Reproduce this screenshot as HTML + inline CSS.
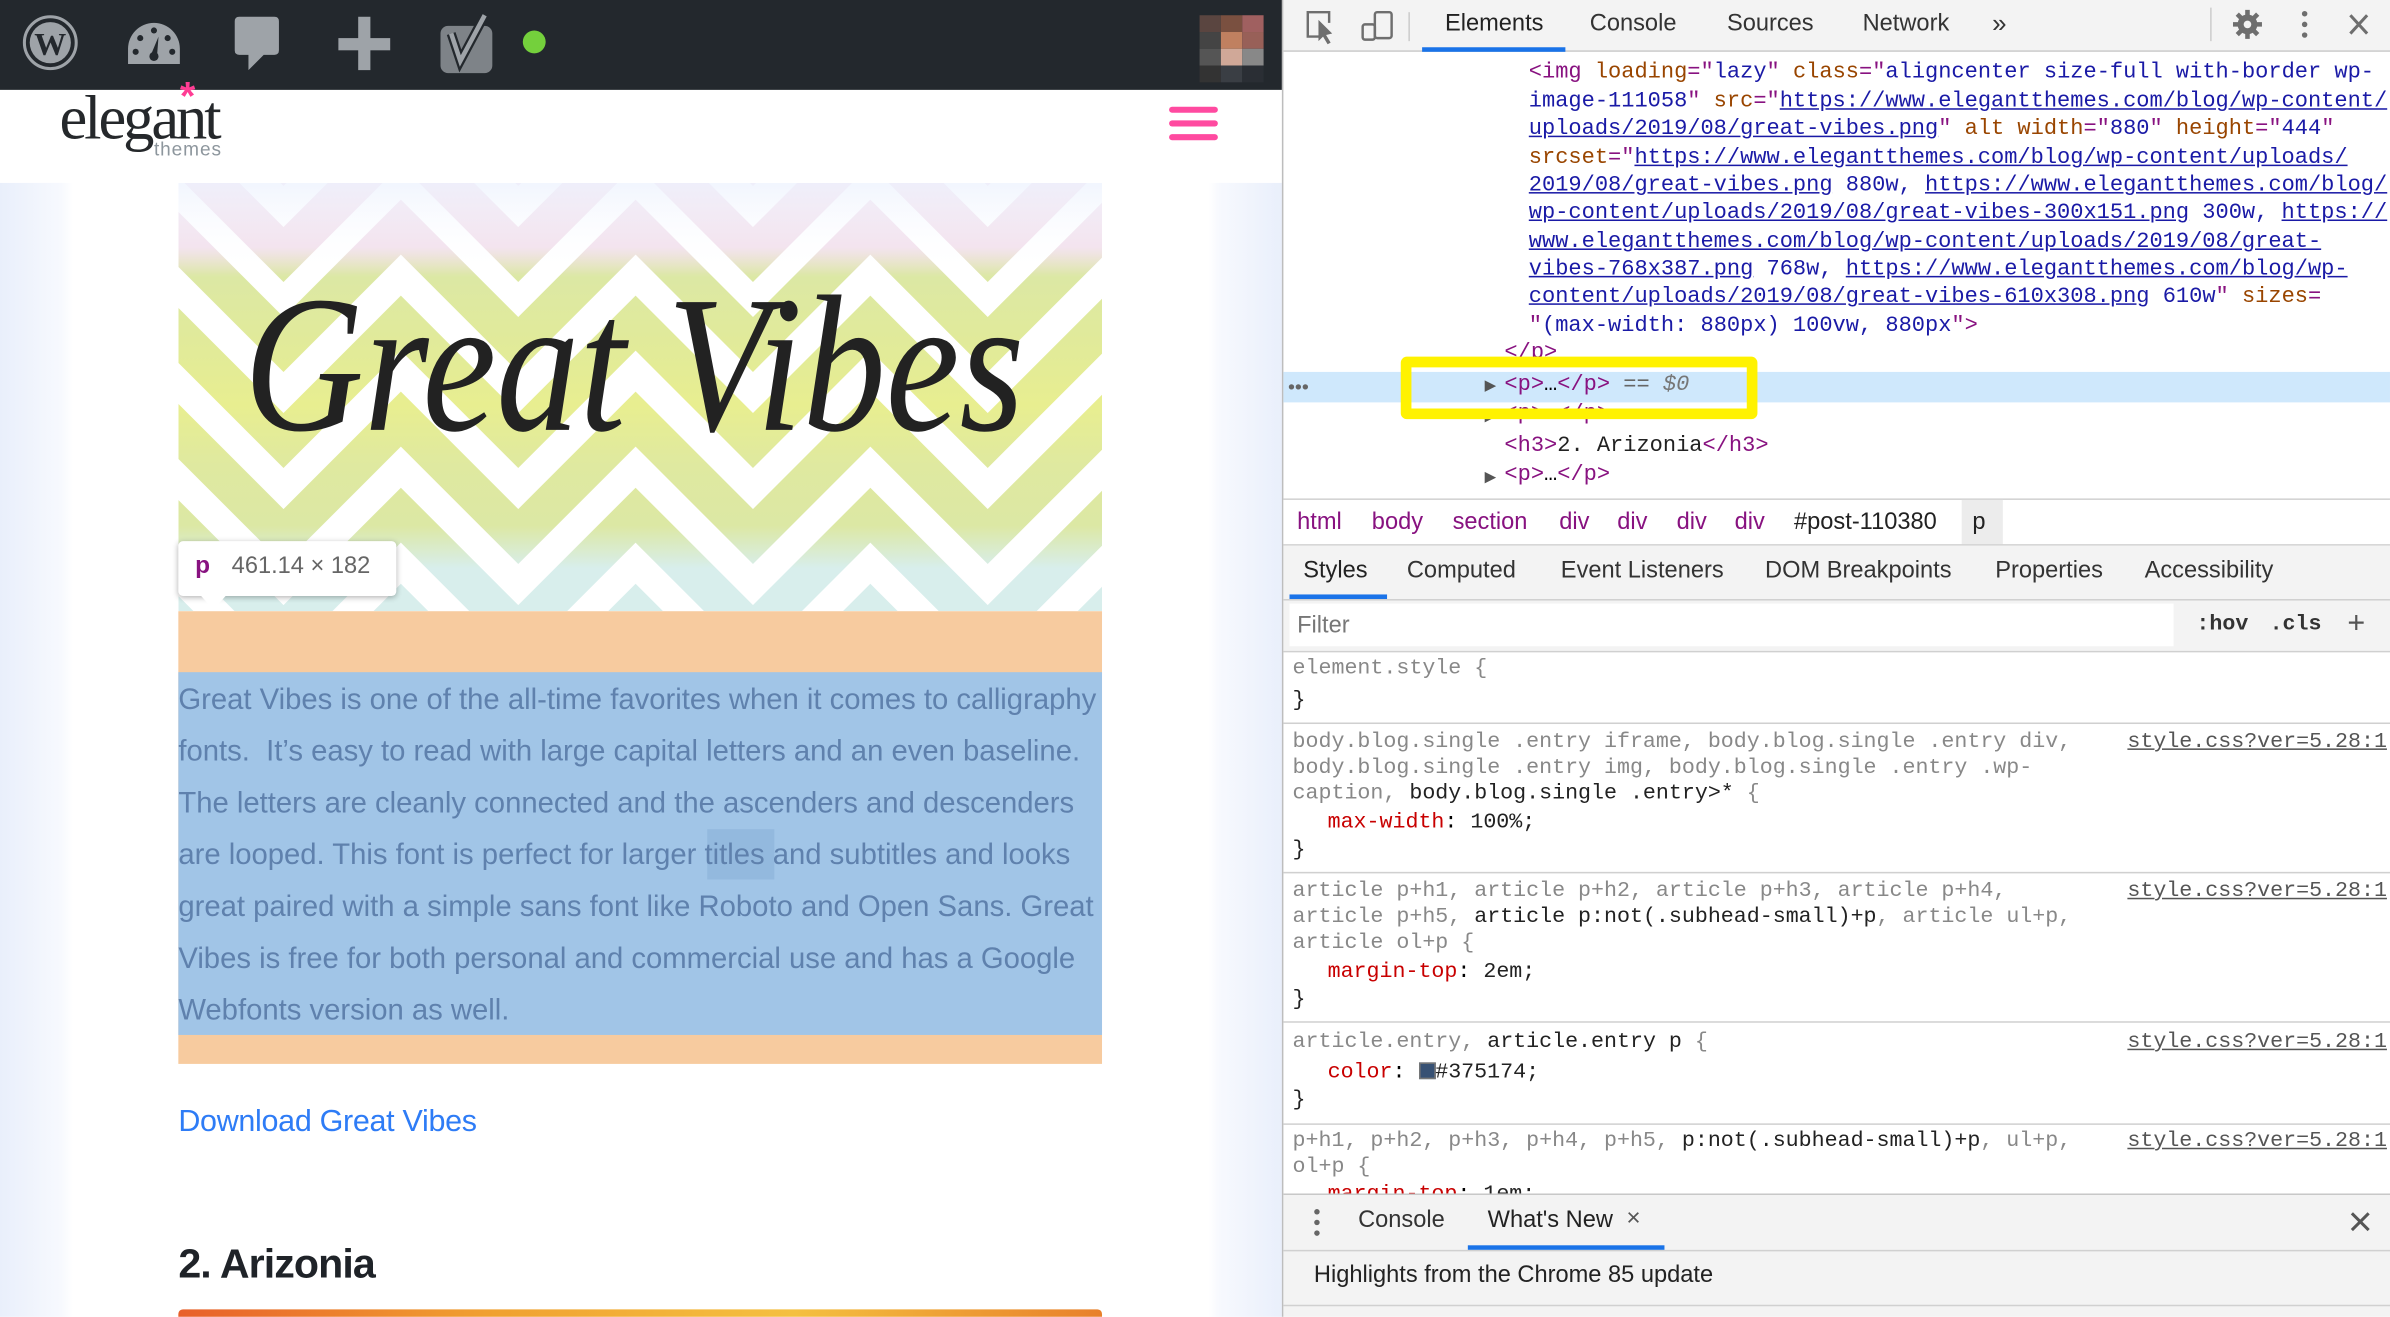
<!DOCTYPE html>
<html><head><meta charset="utf-8"><style>
*{margin:0;padding:0;box-sizing:border-box}
html,body{width:2390px;height:1316px;overflow:hidden;background:#fff}
#r{position:absolute;left:0;top:0;width:1568px;height:864px;transform:scale(1.52423);transform-origin:0 0;overflow:hidden;font-family:"Liberation Sans",sans-serif}
.a{position:absolute}
.m{font-family:"Liberation Mono",monospace;font-size:14.2px;white-space:nowrap;position:absolute}
.e{font-size:14.45px}
.tg{color:#881280}.an{color:#994500}.av{color:#1a1aa6}.lk{color:#1a1aa6;text-decoration:underline}.pu{color:#a5a5a5}
.p{position:absolute;left:117px;white-space:nowrap;font-size:19.2px;letter-spacing:0;color:#5f81ad}
.sel{color:#888}.st{color:#222}.pr{color:#c80000}.src{position:absolute;right:2px;color:#555;text-decoration:underline}
.tab{position:absolute;font-size:15.5px;color:#333;white-space:nowrap}
.hr{position:absolute;left:842px;width:726px;height:1px;background:#d0d0d0}
</style></head><body><div id="r">

<!-- LEFT PAGE -->
<div class="a" style="left:0;top:0;width:841px;height:59px;background:#23282d"></div>
<svg class="a" style="left:0;top:0" width="841" height="59">
 <circle cx="33" cy="28" r="17" fill="none" stroke="#9ea3a8" stroke-width="2"/>
 <circle cx="33" cy="28" r="13.5" fill="#9ea3a8"/>
 <text x="33" y="36" font-family="Liberation Serif" font-size="21" font-weight="bold" fill="#23282d" text-anchor="middle">W</text>
 <path d="M84 42 L84 32 A17 17 0 0 1 118 32 L118 42 Z" fill="#9ea3a8"/>
 <circle cx="101" cy="20" r="2" fill="#23282d"/><circle cx="92" cy="25" r="2" fill="#23282d"/><circle cx="110" cy="25" r="2" fill="#23282d"/><circle cx="89" cy="34" r="2" fill="#23282d"/><circle cx="113" cy="34" r="2" fill="#23282d"/>
 <path d="M99 36 L104 24 L103 37 Z" fill="#23282d"/><circle cx="101" cy="37" r="3" fill="#23282d"/>
 <path d="M157 11 H180 Q183 11 183 14 V33 Q183 36 180 36 H173 L163 46 V36 H157 Q154 36 154 33 V14 Q154 11 157 11 Z" fill="#9ea3a8"/>
 <rect x="235" y="11" width="8" height="35" fill="#9ea3a8"/><rect x="222" y="25" width="34" height="8" fill="#9ea3a8"/>
 <rect x="289" y="17" width="34" height="31" rx="5" fill="#7e8388"/>
 <path d="M296 22 L302 40 L318 10" fill="none" stroke="#23282d" stroke-width="6"/>
 <path d="M296 22 L302 40 L318 10" fill="none" stroke="#9ea3a8" stroke-width="3"/>
 <circle cx="350.5" cy="27.5" r="7.5" fill="#74d03c"/>
 <rect x="787" y="10" width="14" height="11" fill="#5a4540"/><rect x="801" y="10" width="14" height="11" fill="#7a5040"/><rect x="815" y="10" width="14" height="11" fill="#a06060"/>
 <rect x="787" y="21" width="14" height="11" fill="#444"/><rect x="801" y="21" width="14" height="11" fill="#c08060"/><rect x="815" y="21" width="14" height="11" fill="#986058"/>
 <rect x="787" y="32" width="14" height="11" fill="#555"/><rect x="801" y="32" width="14" height="11" fill="#d0a898"/><rect x="815" y="32" width="14" height="11" fill="#888"/>
 <rect x="787" y="43" width="14" height="11" fill="#333"/><rect x="801" y="43" width="14" height="11" fill="#3a3e44"/><rect x="815" y="43" width="14" height="11" fill="#2a2e34"/>
</svg>
<div class="a" style="left:0;top:59px;width:841px;height:61px;background:#fff"></div>
<div class="a" style="left:39px;top:53px;font-family:'Liberation Serif',serif;font-size:41px;letter-spacing:-2px;color:#25282b">elegant</div>
<div class="a" style="left:118px;top:48px;font-size:26px;color:#ff3d94;font-weight:bold">*</div>
<div class="a" style="left:101px;top:92px;font-size:12.5px;letter-spacing:0.6px;color:#8d969d;background:#fff;line-height:13px">themes</div>

<div class="a" style="left:767px;top:70px;width:32px;height:4px;background:#ff4aa0;border-radius:2px"></div>
<div class="a" style="left:767px;top:79px;width:32px;height:4px;background:#ff4aa0;border-radius:2px"></div>
<div class="a" style="left:767px;top:88px;width:32px;height:4px;background:#ff4aa0;border-radius:2px"></div>

<div class="a" style="left:0;top:120px;width:841px;height:744px;background:linear-gradient(90deg,#e9effb 0,#f7f9fe 40px,#fff 48px,#fff 793px,#f7f9fe 800px,#e9effb 841px)"></div>

<svg class="a" style="left:117px;top:120px" width="606" height="281" viewBox="117 120 606 281">
 <defs>
  <linearGradient id="g" x1="0" y1="0" x2="0" y2="1">
   <stop offset="0" stop-color="#f0dcea"/><stop offset="0.15" stop-color="#f1dcea"/>
   <stop offset="0.22" stop-color="#dce8a4"/><stop offset="0.4" stop-color="#e2eb98"/>
   <stop offset="0.52" stop-color="#e8ee90"/><stop offset="0.66" stop-color="#dfe9a0"/>
   <stop offset="0.8" stop-color="#dce8a4"/><stop offset="0.9" stop-color="#d8eeec"/><stop offset="1" stop-color="#d8eeec"/>
  </linearGradient>
  <linearGradient id="w" x1="0" y1="0" x2="0" y2="1"><stop offset="0" stop-color="#eef3fe" stop-opacity="0.8"/><stop offset="1" stop-color="#fff" stop-opacity="0"/></linearGradient>
  <mask id="mk" maskUnits="userSpaceOnUse" x="117" y="120" width="606" height="281">
   <g fill="none" stroke="#fff" stroke-width="25.5">
    <polyline points="32,81 109,4 186,81 263,4 340,81 417,4 494,81 571,4 648,81 725,4 802,81" transform="translate(0,-40)"/>
    <polyline points="32,81 109,4 186,81 263,4 340,81 417,4 494,81 571,4 648,81 725,4 802,81" transform="translate(0,23)"/>
    <polyline points="32,81 109,4 186,81 263,4 340,81 417,4 494,81 571,4 648,81 725,4 802,81" transform="translate(0,86)"/>
    <polyline points="32,81 109,4 186,81 263,4 340,81 417,4 494,81 571,4 648,81 725,4 802,81" transform="translate(0,145)"/>
    <polyline points="32,81 109,4 186,81 263,4 340,81 417,4 494,81 571,4 648,81 725,4 802,81" transform="translate(0,208)"/>
    <polyline points="32,81 109,4 186,81 263,4 340,81 417,4 494,81 571,4 648,81 725,4 802,81" transform="translate(0,271)"/>
    <polyline points="32,81 109,4 186,81 263,4 340,81 417,4 494,81 571,4 648,81 725,4 802,81" transform="translate(0,334)"/>
    <polyline points="32,81 109,4 186,81 263,4 340,81 417,4 494,81 571,4 648,81 725,4 802,81" transform="translate(0,397)"/>
   </g>
  </mask>
 </defs>
 <rect x="117" y="120" width="606" height="281" fill="#fff"/>
 <rect x="117" y="120" width="606" height="281" fill="url(#g)" mask="url(#mk)"/>
 <rect x="117" y="120" width="606" height="60" fill="url(#w)"/>
 <text x="160" y="282" font-family="Liberation Serif,serif" font-style="italic" font-size="128" fill="#222" textLength="512" lengthAdjust="spacingAndGlyphs">Great Vibes</text>
</svg>

<div class="a" style="left:117px;top:355px;width:143px;height:36px;background:#fff;border-radius:3px;box-shadow:0 1px 4px rgba(0,0,0,.3)"></div>
<div class="a" style="left:132px;top:391px;width:0;height:0;border-left:8px solid transparent;border-right:8px solid transparent;border-top:9px solid #fff"></div>
<div class="a" style="left:128px;top:363px;font-size:16px;color:#881280;font-weight:bold">p</div>
<div class="a" style="left:152px;top:363px;font-size:15.5px;color:#666">461.14 × 182</div>

<div class="a" style="left:117px;top:401px;width:606px;height:297px;background:#f7cb9f"></div>
<div class="a" style="left:117px;top:441px;width:606px;height:238px;background:#a1c5e7"></div>
<div class="a" style="left:464px;top:544px;width:44px;height:33px;background:#93b9de"></div>
<div class="p" style="top:449px">Great Vibes is one of the all-time favorites when it comes to calligraphy</div>
<div class="p" style="top:483px">fonts.&nbsp; It’s easy to read with large capital letters and an even baseline.</div>
<div class="p" style="top:517px">The letters are cleanly connected and the ascenders and descenders</div>
<div class="p" style="top:551px">are looped. This font is perfect for larger titles and subtitles and looks</div>
<div class="p" style="top:585px">great paired with a simple sans font like Roboto and Open Sans. Great</div>
<div class="p" style="top:619px">Vibes is free for both personal and commercial use and has a Google</div>
<div class="p" style="top:653px">Webfonts version as well.</div>
<div class="a" style="left:117px;top:725px;font-size:20px;letter-spacing:-0.2px;color:#2e7cf6;white-space:nowrap">Download Great Vibes</div>
<div class="a" style="left:117px;top:814px;font-size:27px;font-weight:bold;letter-spacing:-0.6px;color:#1f2328;white-space:nowrap">2. Arizonia</div>
<div class="a" style="left:117px;top:859px;width:606px;height:5px;background:linear-gradient(90deg,#e8602a,#f0a030,#f4c040,#e8802a);border-radius:3px 3px 0 0"></div>

<!-- DEVTOOLS -->
<div class="a" style="left:841px;top:0;width:1px;height:864px;background:#bdbdbd"></div>
<div class="a" style="left:842px;top:0;width:726px;height:34px;background:#f3f3f3;border-bottom:1px solid #ccc"></div>
<svg class="a" style="left:842px;top:0" width="726" height="34">
 <path d="M24 24 H16 V8 H30 V15" fill="none" stroke="#6e6e6e" stroke-width="1.6"/>
 <path d="M23 13 L23 27 L26 24 L29 29 L31 28 L28 23 L32 22 Z" fill="#6e6e6e"/>
 <rect x="60" y="8" width="11" height="17" rx="1.5" fill="none" stroke="#6e6e6e" stroke-width="1.6"/>
 <rect x="52" y="16" width="8" height="10" rx="1.5" fill="none" stroke="#6e6e6e" stroke-width="1.6"/>
 <rect x="82" y="8" width="1" height="19" fill="#ccc"/>
 <rect x="608" y="5" width="1" height="22" fill="#ccc"/>
 <circle cx="632.5" cy="16" r="6.5" fill="#6e6e6e"/>
 <g stroke="#6e6e6e" stroke-width="3"><line x1="632.5" y1="6.5" x2="632.5" y2="25.5"/><line x1="623" y1="16" x2="642" y2="16"/><line x1="625.8" y1="9.3" x2="639.2" y2="22.7"/><line x1="639.2" y1="9.3" x2="625.8" y2="22.7"/></g>
 <circle cx="632.5" cy="16" r="2.5" fill="#f3f3f3"/>
 <circle cx="670" cy="9" r="1.8" fill="#6e6e6e"/><circle cx="670" cy="16" r="1.8" fill="#6e6e6e"/><circle cx="670" cy="23" r="1.8" fill="#6e6e6e"/>
 <path d="M700 10 L711 22 M711 10 L700 22" stroke="#6e6e6e" stroke-width="2"/>
</svg>
<div class="tab" style="left:948px;top:7px;color:#222">Elements</div>
<div class="a" style="left:933px;top:31px;width:94px;height:3px;background:#1a73e8"></div>
<div class="tab" style="left:1043px;top:7px">Console</div>
<div class="tab" style="left:1133px;top:7px">Sources</div>
<div class="tab" style="left:1222px;top:7px">Network</div>
<div class="tab" style="left:1307px;top:6px;font-size:17px">»</div>

<div class="a" style="left:842px;top:244px;width:726px;height:20px;background:#cfe8fc"></div>
<div class="a" style="left:845px;top:246px;font-size:13px;color:#666">•••</div>
<div class="m e" style="left:1003px;top:40px"><span class="tg">&lt;img </span><span class="an">loading</span><span class="tg">="</span><span class="av">lazy</span><span class="tg">" </span><span class="an">class</span><span class="tg">="</span><span class="av">aligncenter size-full with-border wp-</span></div>
<div class="m e" style="left:1003px;top:59px"><span class="av">image-111058</span><span class="tg">" </span><span class="an">src</span><span class="tg">="</span><span class="lk">https://www.elegantthemes.com/blog/wp-content/</span></div>
<div class="m e" style="left:1003px;top:77px"><span class="lk">uploads/2019/08/great-vibes.png</span><span class="tg">" </span><span class="an">alt width</span><span class="tg">="</span><span class="av">880</span><span class="tg">" </span><span class="an">height</span><span class="tg">="</span><span class="av">444</span><span class="tg">"</span></div>
<div class="m e" style="left:1003px;top:96px"><span class="an">srcset</span><span class="tg">="</span><span class="lk">https://www.elegantthemes.com/blog/wp-content/uploads/</span></div>
<div class="m e" style="left:1003px;top:114px"><span class="lk">2019/08/great-vibes.png</span><span class="av"> 880w, </span><span class="lk">https://www.elegantthemes.com/blog/</span></div>
<div class="m e" style="left:1003px;top:132px"><span class="lk">wp-content/uploads/2019/08/great-vibes-300x151.png</span><span class="av"> 300w, </span><span class="lk">https://</span></div>
<div class="m e" style="left:1003px;top:151px"><span class="lk">www.elegantthemes.com/blog/wp-content/uploads/2019/08/great-</span></div>
<div class="m e" style="left:1003px;top:169px"><span class="lk">vibes-768x387.png</span><span class="av"> 768w, </span><span class="lk">https://www.elegantthemes.com/blog/wp-</span></div>
<div class="m e" style="left:1003px;top:187px"><span class="lk">content/uploads/2019/08/great-vibes-610x308.png</span><span class="av"> 610w</span><span class="tg">" </span><span class="an">sizes</span><span class="tg">=</span></div>
<div class="m e" style="left:1003px;top:206px"><span class="tg">"</span><span class="av">(max-width: 880px) 100vw, 880px</span><span class="tg">"&gt;</span></div>
<div class="m e" style="left:987px;top:224px"><span class="tg">&lt;/p&gt;</span></div>
<div class="m" style="left:974px;top:248px;font-size:10px;color:#555">▶</div>
<div class="m e" style="left:987px;top:245px"><span class="tg">&lt;p&gt;</span>…<span class="tg">&lt;/p&gt;</span><span style="color:#666"> == </span><span style="color:#777;font-style:italic">$0</span></div>
<div class="m" style="left:974px;top:268px;font-size:10px;color:#555">▶</div>
<div class="m e" style="left:987px;top:264px"><span class="tg">&lt;p&gt;</span>…<span class="tg">&lt;/p&gt;</span></div>
<div class="m e" style="left:987px;top:285px"><span class="tg">&lt;h3&gt;</span><span style="color:#222">2. Arizonia</span><span class="tg">&lt;/h3&gt;</span></div>
<div class="m" style="left:974px;top:308px;font-size:10px;color:#555">▶</div>
<div class="m e" style="left:987px;top:304px"><span class="tg">&lt;p&gt;</span>…<span class="tg">&lt;/p&gt;</span></div>
<div class="a" style="left:919px;top:234px;width:234px;height:41px;border:7px solid #fff200;border-radius:4px"></div>

<div class="hr" style="top:327px"></div>
<div class="a" style="left:842px;top:328px;width:726px;height:29px;background:#fff"></div>
<div class="a" style="left:1287px;top:328px;width:27px;height:29px;background:#ececec"></div>
<div class="tab" style="left:851px;top:334px;color:#881280">html</div>
<div class="tab" style="left:900px;top:334px;color:#881280">body</div>
<div class="tab" style="left:953px;top:334px;color:#881280">section</div>
<div class="tab" style="left:1023px;top:334px;color:#881280">div</div>
<div class="tab" style="left:1061px;top:334px;color:#881280">div</div>
<div class="tab" style="left:1100px;top:334px;color:#881280">div</div>
<div class="tab" style="left:1138px;top:334px;color:#881280">div</div>
<div class="tab" style="left:1177px;top:334px;color:#222">#post-110380</div>
<div class="tab" style="left:1294px;top:334px;color:#222">p</div>
<div class="hr" style="top:357px"></div>
<div class="a" style="left:842px;top:358px;width:726px;height:69px;background:#f3f3f3"></div>
<div class="tab" style="left:855px;top:366px;color:#222">Styles</div>
<div class="a" style="left:846px;top:390px;width:64px;height:3px;background:#1a73e8"></div>
<div class="tab" style="left:923px;top:366px">Computed</div>
<div class="tab" style="left:1024px;top:366px">Event Listeners</div>
<div class="tab" style="left:1158px;top:366px">DOM Breakpoints</div>
<div class="tab" style="left:1309px;top:366px">Properties</div>
<div class="tab" style="left:1407px;top:366px">Accessibility</div>
<div class="hr" style="top:393px"></div>
<div class="a" style="left:846px;top:396px;width:580px;height:28px;background:#fff"></div>
<div class="tab" style="left:851px;top:402px;color:#777">Filter</div>
<div class="m" style="left:1441px;top:402px;font-weight:bold;color:#333">:hov</div>
<div class="m" style="left:1489px;top:402px;font-weight:bold;color:#333">.cls</div>
<div class="tab" style="left:1540px;top:398px;font-size:20px;color:#555">+</div>
<div class="hr" style="top:427px"></div>

<div class="m sel" style="left:848px;top:431px">element.style {</div>
<div class="m st" style="left:848px;top:452px">}</div>
<div class="hr" style="top:474px"></div>
<div class="m sel" style="left:848px;top:479px">body.blog.single .entry iframe, body.blog.single .entry div,</div>
<div class="m sel" style="left:848px;top:496px">body.blog.single .entry img, body.blog.single .entry .wp-</div>
<div class="m sel" style="left:848px;top:513px">caption, <span class="st">body.blog.single .entry&gt;*</span> {</div>
<div class="m" style="left:871px;top:532px"><span class="pr">max-width</span>: <span class="st">100%;</span></div>
<div class="m st" style="left:848px;top:550px">}</div>
<div class="m src" style="top:479px">style.css?ver=5.28:1</div>
<div class="hr" style="top:572px"></div>
<div class="m sel" style="left:848px;top:577px">article p+h1, article p+h2, article p+h3, article p+h4,</div>
<div class="m sel" style="left:848px;top:594px">article p+h5, <span class="st">article p:not(.subhead-small)+p</span>, article ul+p,</div>
<div class="m sel" style="left:848px;top:611px">article ol+p {</div>
<div class="m" style="left:871px;top:630px"><span class="pr">margin-top</span>: <span class="st">2em;</span></div>
<div class="m st" style="left:848px;top:648px">}</div>
<div class="m src" style="top:577px">style.css?ver=5.28:1</div>
<div class="hr" style="top:670px"></div>
<div class="m sel" style="left:848px;top:676px">article.entry, <span class="st">article.entry p</span> {</div>
<div class="m" style="left:871px;top:696px"><span class="pr">color</span>: <span style="display:inline-block;width:11px;height:11px;background:#375174;border:1px solid #777;vertical-align:-1px"></span><span class="st">#375174;</span></div>
<div class="m st" style="left:848px;top:714px">}</div>
<div class="m src" style="top:676px">style.css?ver=5.28:1</div>
<div class="hr" style="top:737px"></div>
<div class="m sel" style="left:848px;top:741px">p+h1, p+h2, p+h3, p+h4, p+h5, <span class="st">p:not(.subhead-small)+p</span>, ul+p,</div>
<div class="m sel" style="left:848px;top:758px">ol+p {</div>
<div class="m src" style="top:741px">style.css?ver=5.28:1</div>
<div class="m" style="left:871px;top:776px;height:7px;overflow:hidden"><span class="pr">margin-top</span>: <span class="st">1em;</span></div>

<div class="a" style="left:842px;top:783px;width:726px;height:81px;background:#f3f3f3"></div>
<div class="hr" style="top:783px;background:#c8c8c8"></div>
<svg class="a" style="left:842px;top:784px" width="726" height="36">
 <circle cx="22" cy="11" r="1.8" fill="#666"/><circle cx="22" cy="18" r="1.8" fill="#666"/><circle cx="22" cy="25" r="1.8" fill="#666"/>
 <path d="M701 12 L712 23 M712 12 L701 23" stroke="#555" stroke-width="2"/>
</svg>
<div class="tab" style="left:891px;top:792px">Console</div>
<div class="tab" style="left:976px;top:792px;color:#222">What's New</div>
<div class="tab" style="left:1067px;top:791px;font-size:16px;color:#555">×</div>
<div class="a" style="left:963px;top:817px;width:129px;height:3px;background:#1a73e8"></div>
<div class="hr" style="top:820px"></div>
<div class="tab" style="left:862px;top:828px;color:#222">Highlights from the Chrome 85 update</div>
<div class="hr" style="top:856px"></div>
</div></body></html>
